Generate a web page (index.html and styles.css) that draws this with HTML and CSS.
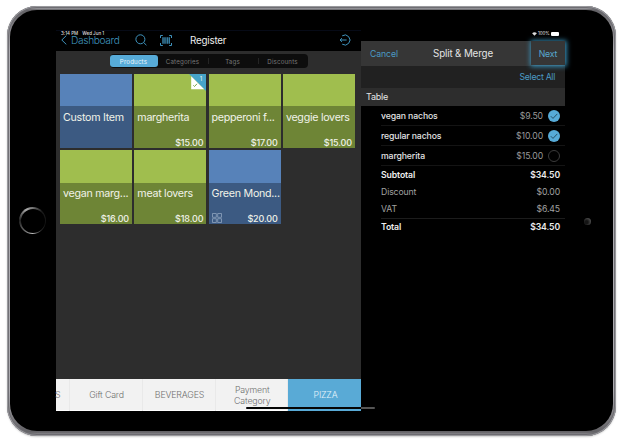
FILE: index.html
```html
<!DOCTYPE html>
<html lang="en">
<head>
    <meta charset="UTF-8">
    <title>Register</title>
    <link rel="stylesheet" href="styles.css">
</head>
<body>

    <div class="tablet">
        <div class="bezel"><div class="home-button"></div></div>

        <div class="screen">
            <div class="register">
                <div class="register-header">
                    <div class="clock"><span>3:14 PM</span><span>Wed Jun 1</span></div>
                    <div class="nav">
                        <svg class="back" viewBox="0 0 6 10"><path d="M5.3 0.6L0.8 5L5.3 9.4"/></svg>
                        <span class="dashboard">Dashboard</span>
                        <svg class="search" viewBox="0 0 12 12"><circle cx="5.4" cy="5.3" r="4.5"/><path d="M8.7 8.5L11.4 11.2"/></svg>
                        <svg class="barcode" viewBox="0 0 12 11"><path d="M2.8 0.5H0.5V3M0.5 8V10.5H2.8M9.2 0.5H11.5V3M11.5 8V10.5H9.2"/><path class="bars" d="M3 2.2V8.8M5 2.2V8.8M7.2 2.2V8.8M9.2 2.2V8.8"/></svg>
                        <h1>Register</h1>
                        <svg class="exit" viewBox="0 0 12 12"><path d="M3.2 1.8A5 5 0 1 1 3.2 10.2M7.6 6H1.1M3 4.2L1 6L3 7.8"/></svg>
                    </div>
                </div>

                <div class="tabs">
                    <span class="tab active">Products</span>
                    <span class="tab">Categories</span>
                    <span class="tab">Tags</span>
                    <span class="tab">Discounts</span>
                </div>

                <div class="products">
                    <div class="product blue"><p class="name">Custom Item</p></div>
                    <div class="product">
                        <svg class="badge" viewBox="0 0 17 17"><path class="corner" d="M0 0H17V17Z"/><path class="paper" d="M2.2 2.2L15.2 15.2H2.2Z"/><path class="tick" d="M4.3 11.3L5.5 12.5L8 9.8"/></svg>
                        <span class="count">1</span>
                        <p class="name">margherita</p><p class="price">$15.00</p>
                    </div>
                    <div class="product"><p class="name">pepperoni f...</p><p class="price">$17.00</p></div>
                    <div class="product"><p class="name">veggie lovers</p><p class="price">$15.00</p></div>
                    <div class="product"><p class="name">vegan marg...</p><p class="price">$16.00</p></div>
                    <div class="product"><p class="name">meat lovers</p><p class="price">$18.00</p></div>
                    <div class="product blue">
                        <p class="name">Green Mond...</p>
                        <svg class="bundle" viewBox="0 0 10 10"><path d="M.5.5H4.3V4.3H.5ZM5.7.5H9.5V4.3H5.7ZM.5 5.7H4.3V9.5H.5ZM5.7 5.7H9.5V9.5H5.7Z"/></svg>
                        <p class="price">$20.00</p>
                    </div>
                </div>

                <div class="categories">
                    <div class="category cut">S</div>
                    <div class="category">Gift Card</div>
                    <div class="category">BEVERAGES</div>
                    <div class="category">Payment<br>Category</div>
                    <div class="category selected">PIZZA</div>
                </div>
            </div>

            <div class="bill">
                <div class="status">
                    <svg class="wifi" viewBox="0 0 6 5"><path d="M0 1.6Q3 -1.1 6 1.6L3 4.8Z"/></svg>
                    <span>100%</span>
                    <i class="battery"></i>
                </div>
                <div class="bill-header">
                    <a class="cancel">Cancel</a>
                    <h2>Split &amp; Merge</h2>
                    <a class="next">Next</a>
                </div>
                <div class="select-all"><a>Select All</a></div>
                <div class="table-title">Table</div>
                <div class="item">
                    <b>vegan nachos</b><span>$9.50</span>
                    <svg class="check" viewBox="0 0 12 12"><circle cx="6" cy="6" r="6"/><path d="M2.8 6.2L5 8.4L9.3 3.9"/></svg>
                </div>
                <div class="item">
                    <b>regular nachos</b><span>$10.00</span>
                    <svg class="check" viewBox="0 0 12 12"><circle cx="6" cy="6" r="6"/><path d="M2.8 6.2L5 8.4L9.3 3.9"/></svg>
                </div>
                <div class="item">
                    <b>margherita</b><span>$15.00</span>
                    <svg class="check empty" viewBox="0 0 12 12"><circle cx="6" cy="6" r="5.5"/></svg>
                </div>
                <div class="sum strong"><span>Subtotal</span><span>$34.50</span></div>
                <div class="sum"><span>Discount</span><span>$0.00</span></div>
                <div class="sum"><span>VAT</span><span>$6.45</span></div>
                <div class="sum strong total"><span>Total</span><span>$34.50</span></div>
            </div>
            <div class="home-indicator"></div>
        </div>

        <div class="bezel"><div class="camera"></div></div>
    </div>

</body>
</html>
```

FILE: styles.css
```css
* {
    box-sizing: border-box;
}

body {
    margin: 0;
    padding: 6px 7px;
    background: #fff;
    font-family: Inter, "Liberation Sans", sans-serif;
    overflow: hidden;
}

h1, h2, p {
    margin: 0;
    font-weight: 400;
}

svg {
    display: block;
    fill: none;
    stroke: #3f93bd;
    flex: none;
}

.tablet {
    position: relative;
    width: 609px;
    height: 430px;
    padding: 4px 3px 5px;
    border-radius: 30px;
    display: grid;
    grid-template-columns: 46px 509px 48px;
    background: linear-gradient(#77767a, #a5a5a8 2px, #626165 4px, #b4b3b7 45px, #b4b3b7 385px, #626165 426px, #88878b 428px, #55545a);
    box-shadow: inset 0 0 0 1px #99999d, inset 0 0 1px 2px #6b6a6f, 0 1px 2px rgba(0, 0, 0, 0.2);
}

/* black glass, rounded inside the metal rim */
.tablet::before {
    content: "";
    position: absolute;
    inset: 4px 3px 5px;
    border-radius: 27px;
    background: #000;
}

.bezel {
    position: relative;
    display: flex;
    align-items: center;
    justify-content: center;
}

.home-button {
    width: 27px;
    height: 27px;
    margin-right: 1px;
    border-radius: 50%;
    padding: 1.5px;
    background: conic-gradient(#777, #1c1c1c 45deg, #111 110deg, #333 140deg, #bbb 180deg, #777 210deg, #222 270deg, #aaa 330deg, #777);
}

.home-button::after {
    content: "";
    display: block;
    height: 100%;
    border-radius: 50%;
    background: #000;
}

.camera {
    width: 7px;
    height: 7px;
    margin: 1px 3px 0 0;
    border-radius: 50%;
    background: radial-gradient(circle at 35% 60%, #151515 25%, #555 80%);
}

.screen {
    position: relative;
    margin-top: 20px;
    height: 381px;
    display: grid;
    grid-template-columns: 305px 204px;
}

.register {
    background: #2d2d2d;
    display: flex;
    flex-direction: column;
    min-width: 0;
}

.register-header {
    height: 21px;
    background: #000;
    border-top: 1px solid #060a16;
    position: relative;
}

.clock {
    position: absolute;
    left: 5px;
    top: 0;
    display: flex;
    gap: 4px;
    color: #ddd;
    font-size: 4.5px;
    font-weight: 500;
    line-height: 6px;
}

.nav {
    height: 18px;
    padding: 0 10px 0 5px;
    display: flex;
    align-items: center;
}

.back {
    width: 6px;
    height: 10px;
}

.dashboard {
    width: 47px;
    margin-left: 4px;
    color: #3f93bd;
    font-size: 10.2px;
    letter-spacing: -0.35px;
    font-weight: 300;
    white-space: nowrap;
}

.search {
    width: 12px;
    height: 12px;
    margin-left: 17px;
}

.barcode {
    width: 12px;
    height: 11px;
    margin-left: 13px;
}

.barcode .bars {
    stroke-width: 1.3;
}

h1 {
    margin-left: 18px;
    color: #eee;
    font-size: 9.8px;
    letter-spacing: -0.2px;
}

.exit {
    width: 12px;
    height: 12px;
    margin-left: auto;
}

.tabs {
    width: 198px;
    height: 14px;
    margin: 3px 0 0 53.5px;
    display: grid;
    grid-template-columns: 48px 50px 50px 50px;
    border-radius: 4px;
    background: #0d0d0d;
    color: #777;
    font-size: 6.2px;
    line-height: 15px;
    text-align: center;
    letter-spacing: 0.15px;
}

.tab + .tab + .tab {
    background: linear-gradient(#252525, #252525) 0 4px / 1px 6px no-repeat;
}

.tab.active {
    margin-top: 1px;
    height: 12px;
    line-height: 13px;
    border-radius: 3px;
    background: #57abd8;
    color: #eaf6fc;
}

.products {
    padding: 6px 0 0 4px;
    display: grid;
    grid-template-columns: repeat(4, 72px);
    grid-auto-rows: 74px;
    gap: 2.3px;
}

.product {
    position: relative;
    padding: 32.5px 3px 0;
    background: linear-gradient(#a0be4e 32.5px, #6e8536 32.5px);
    color: #f0f2e8;
}

.product.blue {
    background: linear-gradient(#5782b9 32.5px, #3c5a82 32.5px);
}

.name {
    height: 23px;
    line-height: 21px;
    font-size: 10.7px;
    letter-spacing: -0.28px;
    white-space: nowrap;
}

.price {
    padding-top: 6px;
    font-size: 9px;
    letter-spacing: -0.15px;
    line-height: 13px;
    font-weight: 500;
    text-align: right;
}

.badge {
    position: absolute;
    top: 0;
    right: 0;
    width: 17px;
    height: 17px;
    stroke: none;
}

.badge .corner {
    fill: #46a4c9;
}

.badge .paper {
    fill: #fff;
}

.badge .tick {
    fill: none;
    stroke: #7da247;
}

.count {
    position: absolute;
    top: 1px;
    right: 4px;
    font-size: 6px;
    line-height: 8px;
}

.bundle {
    position: absolute;
    left: 3px;
    bottom: 1.5px;
    width: 10px;
    height: 10px;
    stroke: #8fa4bf;
    stroke-width: 0.8;
}

.categories {
    margin-top: auto;
    height: 32px;
    display: grid;
    grid-template-columns: 13.5px 73px 73px 72.5px 73px;
    background: #f2f2f2;
    border-bottom: 1px solid #fff;
    color: #707070;
    font-size: 8.8px;
    letter-spacing: -0.15px;
    font-weight: 300;
    line-height: 10.5px;
    text-align: center;
}

.category {
    padding: 1px 0 0 2px;
    display: flex;
    align-items: center;
    justify-content: center;
    border-right: 1px solid #e9e9e9;
}

.category.cut {
    padding-left: 0;
    justify-content: flex-start;
    text-indent: -1px;
}

.category.selected {
    height: 32px;
    border: 0;
    background: #59aad6;
    color: #e3f2fa;
}

.bill {
    background: #000;
    color: #e4e4e4;
    font-size: 8.7px;
    letter-spacing: -0.12px;
}

.status {
    height: 11px;
    padding: 0 6px 4px;
    display: flex;
    align-items: center;
    justify-content: flex-end;
    gap: 1.5px;
    font-size: 4.5px;
}

.wifi {
    width: 5px;
    height: 4px;
    fill: #ddd;
    stroke: none;
}

.battery {
    width: 8px;
    height: 4px;
    border-radius: 1px;
    background: #fff;
}

.bill-header {
    height: 25px;
    display: grid;
    grid-template-columns: 46px 1fr 34px;
    background: #363636;
    line-height: 26px;
    text-align: center;
}

.bill-header h2 {
    padding-right: 12px;
    font-size: 9.8px;
    letter-spacing: -0.15px;
}

.cancel, .select-all {
    color: #4b9bc4;
}

.next {
    color: #58a9cf;
    background: #363636;
    box-shadow: 0 0 5px 1.5px #3b98c2;
    position: relative;
    height: 24px;
}

.select-all {
    height: 22px;
    padding-right: 10px;
    background: #212121;
    line-height: 22px;
    text-align: right;
    letter-spacing: -0.28px;
}

.table-title {
    height: 18px;
    padding-left: 5px;
    background: #2d2d2d;
    line-height: 18px;
    font-size: 9px;
    letter-spacing: -0.2px;
}

.item {
    height: 20px;
    margin-left: 20px;
    padding-right: 5px;
    display: flex;
    align-items: center;
    border-bottom: 1px solid #141414;
}

.item b {
    font-weight: 500;
    flex: 1;
}

.item span {
    color: #999;
}

.check {
    width: 12px;
    height: 12px;
    margin-left: 5px;
    fill: #57abd8;
    stroke: none;
}

.check path {
    fill: none;
    stroke: #17374a;
    stroke-width: 0.8;
}

.check.empty {
    fill: none;
    stroke: #3b3b3b;
}

.sum {
    height: 17.3px;
    margin-left: 20px;
    padding-right: 5px;
    display: flex;
    justify-content: space-between;
    align-items: center;
    color: #a0a0a0;
}

.sum.strong {
    color: #eee;
    font-weight: 600;
}

.sum.total {
    border-top: 1px solid #1c1c1c;
}

.home-indicator {
    position: absolute;
    left: 190px;
    bottom: 2px;
    width: 129px;
    height: 2px;
    border-radius: 1px;
    background: linear-gradient(90deg, #050505 115px, #555 115px);
}
```
